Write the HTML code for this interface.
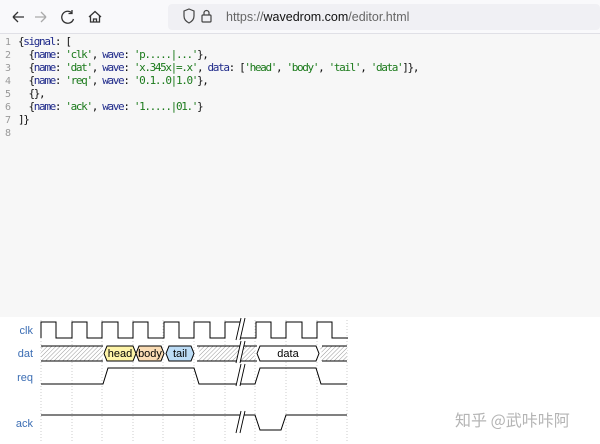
<!DOCTYPE html>
<html><head><meta charset="utf-8"><style>
body{margin:0;width:600px;height:444px;overflow:hidden;background:#fff;font-family:"Liberation Sans",sans-serif;position:relative}
.tb{position:absolute;left:0;top:0;width:600px;height:33px;background:#f9f9fb;border-bottom:1px solid #e0e0e6}
.url{position:absolute;left:168px;top:4px;width:432px;height:26px;background:#f0f0f4;border-radius:4px}
.ed{position:absolute;left:0;top:34px;width:600px;height:283px;background:#f7f7f7}
.code{position:absolute;left:0;top:36px;font-family:"DejaVu Sans Mono",monospace;font-size:11px;letter-spacing:-1.36px;line-height:12px;color:#111;white-space:pre}
.ln{display:inline-block;width:18px;color:#999;text-align:left;padding-left:5px;box-sizing:border-box;letter-spacing:0;font-size:10px}
.k{color:#1f2a8a}.s{color:#1b7a1b}
</style></head><body>
<div class="tb">
<svg width="160" height="33" style="position:absolute;left:0;top:0" fill="none" stroke-width="1.3">
<path d="M13 17h11M13 17l5-5M13 17l5 5" stroke="#333"/>
<path d="M35 17h11M46 17l-5-5M46 17l-5 5" stroke="#aaa"/>
<path d="M72 13a6 6 0 1 0 1.5 6M72 10v3.5h-3.5" stroke="#333"/>
<path d="M89 17l6-5.5 6 5.5M90.5 16v6h9v-6M93.5 22v-3h3v3" stroke="#333"/>
</svg>
<div class="url">
<svg width="40" height="26" style="position:absolute;left:8px;top:0" fill="none" stroke="#444" stroke-width="1.2">
<path d="M8 7l5-2 5 2v5c0 4-3 6-5 7-2-1-5-3-5-7z"/>
<rect x="26" y="11" width="9" height="7" rx="1"/><path d="M28 11v-2a2.5 2.5 0 0 1 5 0v2"/>
</svg>
<span style="position:absolute;left:58px;top:6px;font-size:12.5px;color:#666">https://<b style="color:#111;font-weight:normal">wavedrom.com</b>/editor.html</span>
</div>
</div>
<div class="ed"></div>
<div class="code"><span class="ln">1</span>{<span class="k">signal</span>: [
<span class="ln">2</span>  {<span class="k">name</span>: <span class="s">'clk'</span>, <span class="k">wave</span>: <span class="s">'p.....|...'</span>},
<span class="ln">3</span>  {<span class="k">name</span>: <span class="s">'dat'</span>, <span class="k">wave</span>: <span class="s">'x.345x|=.x'</span>, <span class="k">data</span>: [<span class="s">'head'</span>, <span class="s">'body'</span>, <span class="s">'tail'</span>, <span class="s">'data'</span>]},
<span class="ln">4</span>  {<span class="k">name</span>: <span class="s">'req'</span>, <span class="k">wave</span>: <span class="s">'0.1..0|1.0'</span>},
<span class="ln">5</span>  {},
<span class="ln">6</span>  {<span class="k">name</span>: <span class="s">'ack'</span>, <span class="k">wave</span>: <span class="s">'1.....|01.'</span>}
<span class="ln">7</span>]}
<span class="ln">8</span></div>
<svg width="600" height="127" style="position:absolute;left:0;top:317px" font-family="Liberation Sans,sans-serif">
<defs><pattern id="h" width="3" height="3" patternUnits="userSpaceOnUse" patternTransform="rotate(45)"><rect width="3" height="3" fill="#fff"/><line x1="0" y1="0" x2="0" y2="3" stroke="#999" stroke-width="1"/></pattern>
<g id="gap"><path d="M236 10l5-22h4l-5 22z" fill="#fff" stroke="none"/><path d="M236 10l5-22M240 10l5-22" stroke="#000" stroke-width="0.9" fill="none"/></g></defs>
<g stroke="#ccc" stroke-dasharray="1,2" stroke-width="1">
<path d="M41 3v122M72 3v122M102 3v122M133 3v122M163 3v122M194 3v122M225 3v122M255 3v122M286 3v122M317 3v122M347 3v122"/>
</g>
<g fill="#3c6eb4" font-size="11" text-anchor="end">
<text x="33" y="17">clk</text><text x="33" y="40">dat</text><text x="33" y="64">req</text><text x="33" y="110">ack</text>
</g>
<g fill="none" stroke="#000" stroke-width="1">
<path d="M41 21V5h15v16h16V5h15v16h15V5h16v16h15V5h15v16h16V5h15v16h15V5h16v16h15V5h15v16h16V5h15v16h15V5h16v16h15V5h15v16h16"/>
</g>
<rect x="41" y="29" width="62" height="15" fill="url(#h)"/>
<path d="M104 36.5l3-7.5h26l3 7.5-3 7.5h-26z" fill="#fef4a8" stroke="#000"/>
<path d="M136 36.5l3-7.5h22l3 7.5-3 7.5h-22z" fill="#fadcb4" stroke="#000"/>
<path d="M166 36.5l3-7.5h22l3 7.5-3 7.5h-22z" fill="#bcdcf6" stroke="#000"/>
<path d="M197 29h60l-3 7.5 3 7.5h-60l3-7.5z" fill="url(#h)"/>
<path d="M257 36.5l3-7.5h56l3 7.5-3 7.5h-56z" fill="#fff" stroke="#000"/>
<path d="M319 29h28v15h-28l3-7.5z" fill="url(#h)"/>
<path d="M41 29h62M41 44h62M197 29h60M197 44h60M322 29h25M322 44h25" stroke="#000" fill="none"/>
<g fill="#000" font-size="11" text-anchor="middle"><text x="120" y="40">head</text><text x="150" y="40">body</text><text x="180" y="40">tail</text><text x="288" y="40">data</text></g>
<g fill="none" stroke="#000">
<path d="M41 67h62l5-16h86l5 16h56l5-16h56l5 16h26"/>
<path d="M41 98h214l5 15h21l5-15h61"/>
</g>
<use href="#gap" y="13"/><use href="#gap" y="36"/><use href="#gap" y="59"/><use href="#gap" y="106"/>
<text x="455" y="109" font-family="Noto Sans CJK SC,sans-serif" font-size="16" fill="#b4b4b4">知乎 @武咔咔阿</text>
</svg>
</body></html>
